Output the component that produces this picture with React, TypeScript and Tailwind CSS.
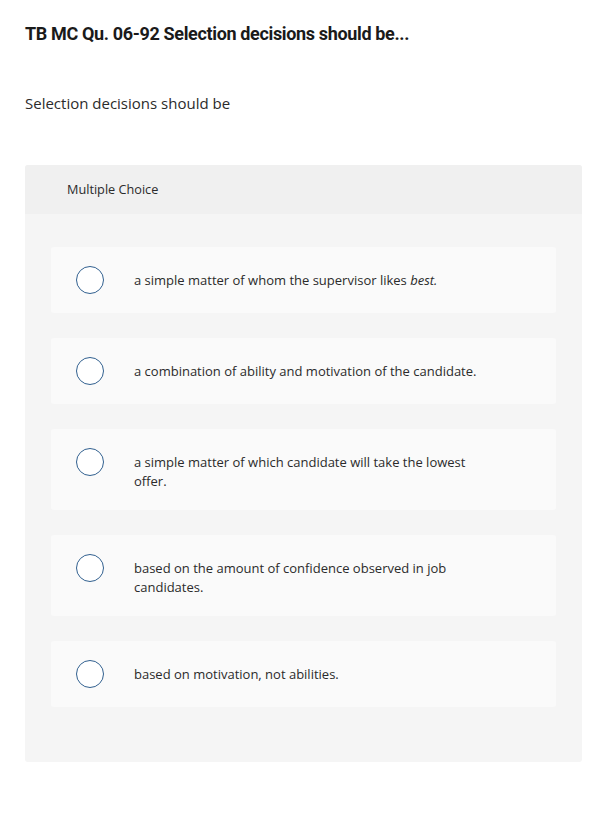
import React from "react";

const options: React.ReactNode[] = [
  <>a simple matter of whom the supervisor likes <em>best.</em></>,
  <>a combination of ability and motivation of the candidate.</>,
  <>a simple matter of which candidate will take the lowest offer.</>,
  <>based on the amount of confidence observed in job candidates.</>,
  <>based on motivation, not abilities.</>,
];

export default function App() {
  return (
    <div className="min-h-[833px] w-[607px] bg-white px-[25px] pt-[22px] text-[#222]" style={{ fontFamily: "'Open Sans', Lato, sans-serif" }}>
      <h1 className="text-[18px] font-bold leading-[24px] tracking-[-0.35px] text-[#1a1a1a]" style={{ fontFamily: "Roboto, sans-serif" }}>TB MC Qu. 06-92 Selection decisions should be...</h1>
      <p className="mt-[47px] text-[15px] leading-[20px] text-[#2b2b2b]">Selection decisions should be</p>
      <div className="mt-[52px] w-[557px] overflow-hidden rounded-[3px] bg-[#f5f5f5]">
        <div className="flex h-[49px] items-center bg-[#f0f0f0] pl-[42px] text-[12.7px] text-[#2b2b2b]">Multiple Choice</div>
        <div className="flex flex-col gap-[25px] px-[26px] pb-[55px] pt-[33px]">
          {options.map((o, i) => (
            <div key={i} className="flex items-start rounded-[3px] bg-[#fafafa] py-[19px] pl-[25px]">
              <div className="h-[28px] w-[28px] shrink-0 rounded-full border-[1.5px] border-[#31608f] bg-white" />
              <div className="ml-[30px] mt-[5px] max-w-[356px] text-[13px] leading-[19px] text-[#2b2b2b]">{o}</div>
            </div>
          ))}
        </div>
      </div>
    </div>
  );
}
